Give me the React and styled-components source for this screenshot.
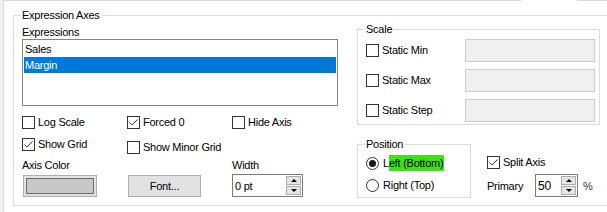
import React from "react";
import styled, { createGlobalStyle } from "styled-components";

const GlobalStyle = createGlobalStyle`
* {
  margin: 0;
  padding: 0;
  box-sizing: border-box;
}
body {
  background: #f0f0f0;
  overflow: hidden;
  font-family: "Liberation Sans", Arial, sans-serif;
  font-size: 11px;
  letter-spacing: -0.25px;
  color: #000;
}
`

const Page = styled.div`
  width: 607px;
  height: 212px;
  padding-left: 3px;
  display: flex;
`
const TabPage = styled.div`
  flex: 1;
  display: flex;
  flex-direction: column;
  background: #fff;
  border-left: 1px solid #d9d9d9;
  overflow: hidden;
`
const TopEdge = styled.div`
  display: flex;
  height: 1px;
`
const EdgeLine = styled.div`
  width: ${p => p.$w}px;
  background: ${p => (p.$gap ? "transparent" : "#d9d9d9")};
`
const Content = styled.div`
  padding: 14px 0 0 9px;
`
const GroupBox = styled.div`
  border: 1px solid #dcdcdc;
  padding: ${p => p.$pad || "0 0 0 8px"};
  width: ${p => p.$w}px;
  margin-top: ${p => p.$mt || 0}px;
`
const Legend = styled.div`
  width: fit-content;
  margin: -7px 0 0 -2px;
  padding: 0 2px;
  line-height: 13px;
  background: #fff;
`
const Body = styled.div`
  display: flex;
`
const LeftCol = styled.div`
  width: 316px;
`
const RightCol = styled.div`
  margin-left: 19px;
  width: 243px;
`
const FieldLabel = styled.div`
  line-height: 13px;
  margin-top: ${p => p.$mt || 0}px;
`
const ListBox = styled.div`
  height: 67px;
  border: 1px solid #828282;
  padding: 1px;
`
const ListItem = styled.div`
  height: 16px;
  line-height: 16px;
  padding-left: 1px;
  background: ${p => (p.$selected ? "#0078d7" : "transparent")};
  color: ${p => (p.$selected ? "#fff" : "#000")};
`
const OptionGrid = styled.div`
  display: grid;
  grid-template-columns: 105px 105px 84px;
  grid-template-rows: 22px 21px 15px 23px;
  margin-top: 10px;
`
const Check = styled.label`
  display: flex;
  align-items: ${p => (p.$center ? "center" : "flex-start")};
  height: ${p => (p.$h ? `${p.$h}px` : "auto")};
  margin-top: ${p => p.$nudge || 0}px;
  line-height: 13px;
  white-space: nowrap;
`
const Box = styled.span`
  width: 13px;
  height: 13px;
  flex: none;
  border: 1px solid #333;
  background: #fff;
  margin-right: 3px;
  display: flex;
`
const Circle = styled.span`
  width: 13px;
  height: 13px;
  flex: none;
  border: 1px solid #333;
  border-radius: 50%;
  background: #fff;
  margin-right: 4px;
  display: flex;
  align-items: center;
  justify-content: center;
  &::after {
    content: "";
    width: 7px;
    height: 7px;
    border-radius: 50%;
    background: ${p => (p.$on ? "#1a1a1a" : "transparent")};
  }
`
const ColorButton = styled.div`
  width: 74px;
  height: 22px;
  margin: 1px 0 0 1px;
  border: 1px solid #adadad;
  background: #e1e1e1;
  padding: 2px;
`
const Swatch = styled.div`
  height: 100%;
  border: 1px solid #6d6d6d;
  background: #c8c8c8;
`
const PushButton = styled.div`
  width: 73px;
  height: 22px;
  margin: 1px 0 0 1px;
  border: 1px solid #adadad;
  background: #e1e1e1;
  display: flex;
  align-items: center;
  justify-content: center;
`
const Spinner = styled.div`
  width: ${p => p.$w}px;
  height: 23px;
  border: 1px solid #7a7a7a;
  background: #fff;
  display: flex;
  align-items: center;
`
const SpinText = styled.span`
  padding-left: 2px;
  flex: 1;
  font-size: ${p => (p.$big ? "12px" : "11px")};
`
const SpinButtons = styled.div`
  display: flex;
  flex-direction: column;
  gap: 1px;
  padding: 1px;
  height: 100%;
`
const SpinButton = styled.div`
  width: 15px;
  flex: 1;
  border: 1px solid #acacac;
  background: #e5e5e5;
  display: flex;
  align-items: center;
  justify-content: center;
  &::after {
    content: "";
    border-left: 3px solid transparent;
    border-right: 3px solid transparent;
    ${p => (p.$down ? "border-top: 3px solid #000;" : "border-bottom: 3px solid #000;")}
  }
`
const ScaleRows = styled.div`
  display: flex;
  flex-direction: column;
  gap: 7px;
  margin-top: 3px;
`
const ScaleRow = styled.div`
  display: flex;
  align-items: center;
  height: 23px;
`
const CheckCell = styled.div`
  width: 99px;
`
const DisabledBox = styled.div`
  width: 130px;
  height: 23px;
  border: 1px solid #cccccc;
  background: #f0f0f0;
`
const LowerRow = styled.div`
  display: flex;
  align-items: flex-start;
  margin-top: 19px;
`
const RadioList = styled.div`
  margin-top: 1px;
  padding-bottom: 1px;
`
const RadioRow = styled.label`
  display: flex;
  align-items: center;
  height: 22px;
  line-height: 13px;
  white-space: nowrap;
`
const Mark = styled.span`
  background: #3fe01a;
  line-height: 16px;
  display: inline-block;
  padding-right: 1px;
`
const SplitArea = styled.div`
  margin: 10px 0 0 16px;
  display: flex;
  flex-direction: column;
  gap: 4px;
`
const PrimaryRow = styled.div`
  display: flex;
  align-items: center;
`
const PrimaryLabel = styled.span`
  width: 48px;
`
const Unit = styled.span`
  margin-left: 5px;
  color: #333;
`

function CheckBox({ checked, label, ...rest }) {
  return (
    <Check {...rest}>
      <Box>
        {checked && (
          <svg width="11" height="11" viewBox="0 0 11 11">
            <polyline points="1.5,5.5 4,8 9.5,2.5" fill="none" stroke="#333" strokeWidth="1" />
          </svg>
        )}
      </Box>
      {label}
    </Check>
  )
}

function NumberSpin({ value, w, big }) {
  return (
    <Spinner $w={w}>
      <SpinText $big={big}>{value}</SpinText>
      <SpinButtons>
        <SpinButton />
        <SpinButton $down />
      </SpinButtons>
    </Spinner>
  )
}

function App() {
  const scaleFields = ["Static Min", "Static Max", "Static Step"]

  return (
    <Page>
      <GlobalStyle />
      <TabPage>
        <TopEdge>
          <EdgeLine $w={521} />
          <EdgeLine $w={57} $gap />
          <EdgeLine $w={30} />
        </TopEdge>
        <Content>
          <GroupBox $w={600} $pad="0 0 7px 8px">
            <Legend>Expression Axes</Legend>
            <Body>
              <LeftCol>
                <FieldLabel $mt={4}>Expressions</FieldLabel>
                <ListBox>
                  <ListItem>Sales</ListItem>
                  <ListItem $selected>Margin</ListItem>
                </ListBox>
                <OptionGrid>
                  <CheckBox label="Log Scale" />
                  <CheckBox label="Forced 0" checked />
                  <CheckBox label="Hide Axis" />
                  <CheckBox label="Show Grid" checked />
                  <CheckBox label="Show Minor Grid" $nudge={3} />
                  <div />
                  <FieldLabel>Axis Color</FieldLabel>
                  <div />
                  <FieldLabel>Width</FieldLabel>
                  <ColorButton><Swatch /></ColorButton>
                  <PushButton>Font...</PushButton>
                  <NumberSpin value="0 pt" w={71} />
                </OptionGrid>
              </LeftCol>
              <RightCol>
                <GroupBox $w={243} $mt={7} $pad="0 4px 2px 8px">
                  <Legend>Scale</Legend>
                  <ScaleRows>
                    {scaleFields.map(f => (
                      <ScaleRow key={f}>
                        <CheckCell><CheckBox label={f} /></CheckCell>
                        <DisabledBox />
                      </ScaleRow>
                    ))}
                  </ScaleRows>
                </GroupBox>
                <LowerRow>
                  <GroupBox $w={114}>
                    <Legend>Position</Legend>
                    <RadioList>
                      <RadioRow><Circle $on />L<Mark>eft (Bottom)</Mark></RadioRow>
                      <RadioRow><Circle />Right (Top)</RadioRow>
                    </RadioList>
                  </GroupBox>
                  <SplitArea>
                    <CheckBox label="Split Axis" checked $center $h={16} />
                    <PrimaryRow>
                      <PrimaryLabel>Primary</PrimaryLabel>
                      <NumberSpin value="50" w={43} big />
                      <Unit>%</Unit>
                    </PrimaryRow>
                  </SplitArea>
                </LowerRow>
              </RightCol>
            </Body>
          </GroupBox>
        </Content>
      </TabPage>
    </Page>
  );
}

export default App;
